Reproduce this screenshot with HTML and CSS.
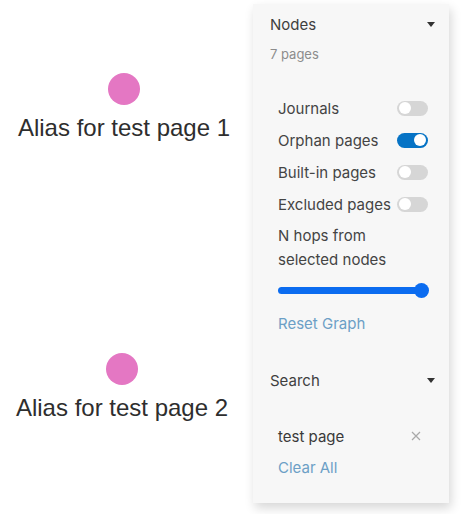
FILE: index.html
```html
<!DOCTYPE html>
<html>
<head>
<meta charset="utf-8">
<link rel="stylesheet" href="styles.css">
</head>
<body>
<div class="stage">
  <div class="canvas">
    <div class="node node-1">
      <div class="dot"></div>
      <div class="label">Alias for test page 1</div>
    </div>
    <div class="node node-2">
      <div class="dot"></div>
      <div class="label">Alias for test page 2</div>
    </div>
  </div>
  <aside class="panel">
    <div class="section-head">
      <span>Nodes</span>
      <span class="caret"></span>
    </div>
    <div class="count">7 pages</div>
    <div class="options">
      <div class="row"><span class="row-label">Journals</span><span class="toggle"></span></div>
      <div class="row"><span class="row-label">Orphan pages</span><span class="toggle on"></span></div>
      <div class="row"><span class="row-label">Built-in pages</span><span class="toggle"></span></div>
      <div class="row"><span class="row-label">Excluded pages</span><span class="toggle"></span></div>
      <div class="hops">N hops from<br>selected nodes</div>
      <div class="slider"><div class="track"></div><div class="thumb"></div></div>
      <div class="link reset">Reset Graph</div>
    </div>
    <div class="section-head search-head">
      <span>Search</span>
      <span class="caret"></span>
    </div>
    <div class="options">
      <div class="search-item">
        <span>test page</span>
        <svg class="close" width="10" height="10" viewBox="0 0 10 10"><path d="M1 1 L9 9 M9 1 L1 9" stroke="#a9a9a9" stroke-width="1.2" fill="none"/></svg>
      </div>
      <div class="link clear">Clear All</div>
    </div>
  </aside>
</div>
</body>
</html>
```

FILE: styles.css
```css
html, body {
  margin: 0;
  padding: 0;
  background: #ffffff;
}

.stage {
  display: flex;
  width: 463px;
  height: 514px;
  overflow: hidden;
}

.canvas {
  position: relative;
  width: 253px;
  flex: none;
}

.node {
  position: absolute;
  width: 240px;
  display: flex;
  flex-direction: column;
  align-items: center;
}

.node-1 { left: 4px; top: 73px; }
.node-2 { left: 2px; top: 353px; }

.dot {
  width: 32px;
  height: 32px;
  border-radius: 50%;
  background: #e477c3;
}

.label {
  margin-top: 9px;
  font-family: "Liberation Sans", Arial, sans-serif;
  font-size: 24px;
  line-height: 28px;
  color: #2e2e2e;
  white-space: nowrap;
}

.panel {
  margin-top: 4px;
  width: 196px;
  height: 499px;
  background: #f7f7f7;
  box-shadow: 2px 5px 10px rgba(0, 0, 0, 0.16);
  font-family: Inter, "Noto Sans", sans-serif;
  box-sizing: border-box;
  flex: none;
}

.section-head {
  height: 40px;
  display: flex;
  align-items: center;
  justify-content: space-between;
  padding: 0 14px 0 17px;
  font-size: 15px;
  color: #3f3f3f;
}

.caret {
  width: 0;
  height: 0;
  border-left: 4.5px solid transparent;
  border-right: 4.5px solid transparent;
  border-top: 5px solid #333333;
}

.count {
  padding-left: 17px;
  font-size: 13px;
  line-height: 20px;
  color: #8c8c8c;
}

.options {
  padding: 0 21px 0 25px;
}

.count + .options {
  margin-top: 28px;
}

.row {
  height: 32px;
  display: grid;
  grid-template-columns: 1fr 31px;
  align-items: center;
  font-size: 15px;
  color: #444444;
}

.row-label {
  white-space: nowrap;
}

.toggle {
  position: relative;
  width: 31px;
  height: 15px;
  border-radius: 8px;
  background: #d6d6d6;
}

.toggle::after {
  content: "";
  position: absolute;
  top: 1.5px;
  left: 2px;
  width: 12px;
  height: 12px;
  border-radius: 50%;
  background: #ffffff;
}

.toggle.on {
  background: #0673c5;
}

.toggle.on::after {
  left: 17px;
}

.hops {
  margin-top: 4px;
  font-size: 15px;
  line-height: 24px;
  color: #444444;
}

.slider {
  position: relative;
  margin-top: 11px;
  height: 14px;
  display: flex;
  align-items: center;
}

.track {
  width: 100%;
  height: 7px;
  border-radius: 4px;
  background: #0b6cf0;
}

.thumb {
  position: absolute;
  right: -1px;
  top: 0;
  width: 15px;
  height: 15px;
  border-radius: 50%;
  background: #0b6cf0;
}

.link {
  font-size: 15px;
  line-height: 24px;
  color: #6c9fc6;
}

.reset {
  margin-top: 15px;
}

.search-head {
  margin-top: 24px;
}

.search-item {
  margin-top: 24px;
  height: 24px;
  display: flex;
  align-items: center;
  justify-content: space-between;
  padding-right: 7px;
  font-size: 15px;
  color: #3a3a3a;
}

.clear {
  margin-top: 8px;
}
```
